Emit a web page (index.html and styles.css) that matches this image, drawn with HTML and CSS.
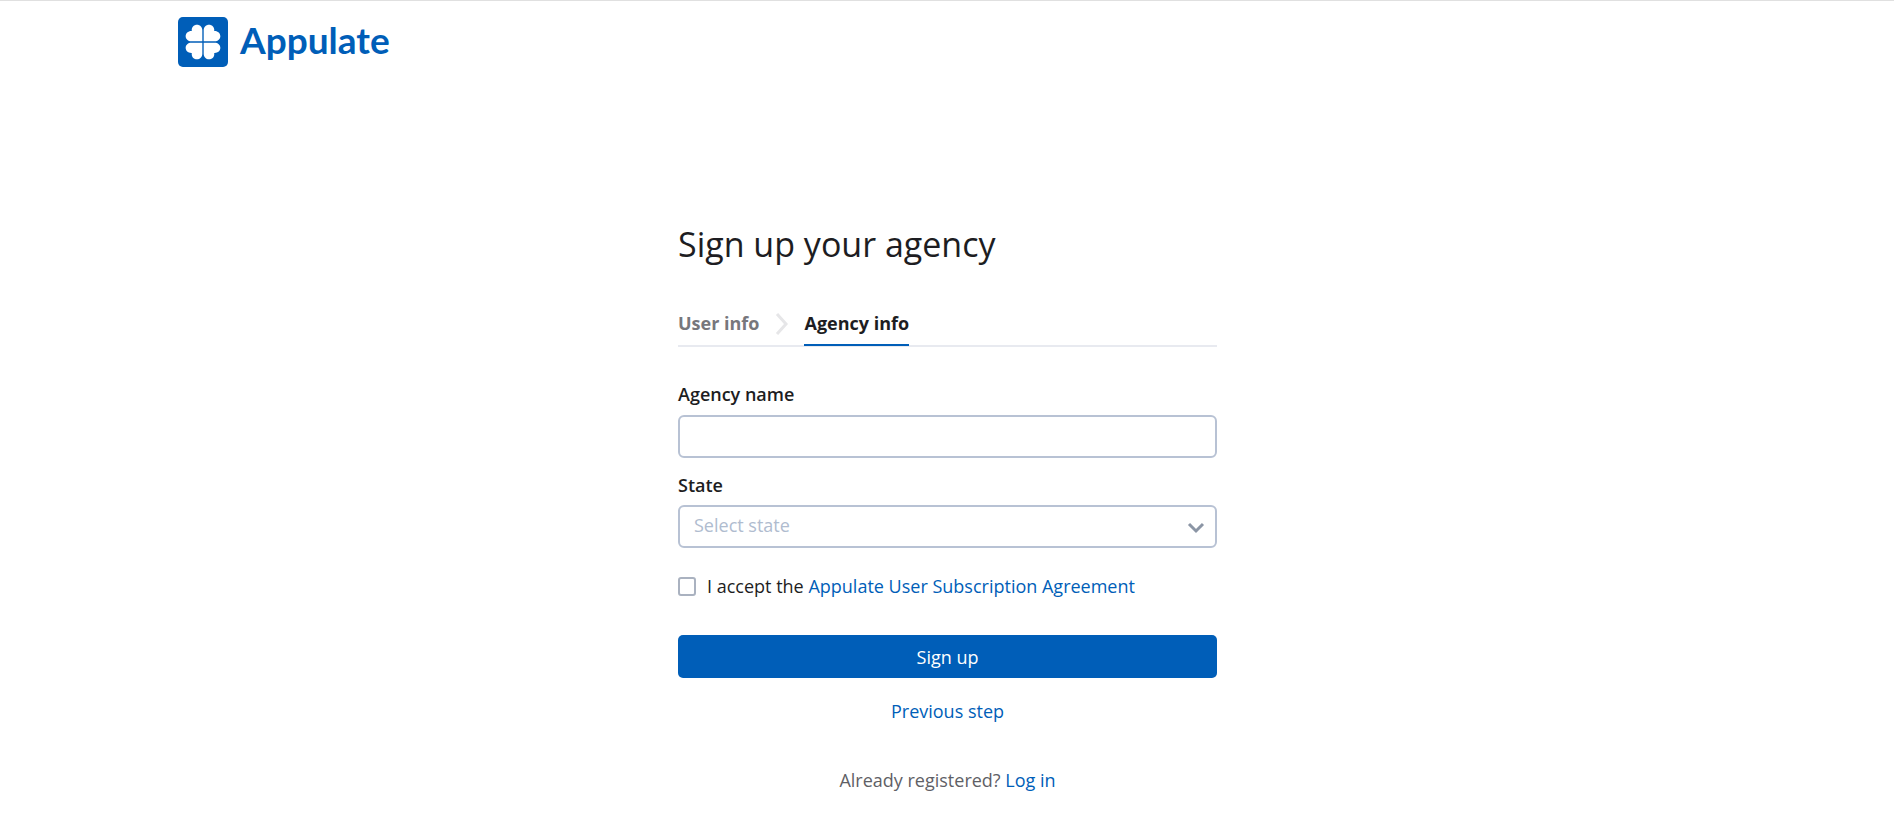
FILE: index.html
```html
<!DOCTYPE html>
<html lang="en">
<head>
    <meta charset="UTF-8">
    <title>Sign up your agency</title>
    <link rel="stylesheet" href="styles.css">
</head>
<body>
    <header class="top">
        <a class="logo" href="#">
            <svg class="logo-mark" width="50" height="50" viewBox="0 0 51 51">
                <rect width="51" height="51" rx="5" fill="#005eb8"/>
                <g fill="#fff">
                    <path id="leaf" d="M24.8 24.8V13.5c0-3.6-2.6-5.7-5.4-5.7-3 0-5.4 2.3-5.4 5.3 0 .5 0 .9.1 1.3-3.6-.3-6.3 2.200-6.300 5.300 0 3 2.500 5.100 5.800 5.100z"/>
                    <use href="#leaf" transform="matrix(-1 0 0 1 51 0)"/>
                    <use href="#leaf" transform="matrix(1 0 0 -1 0 51)"/>
                    <use href="#leaf" transform="matrix(-1 0 0 -1 51 51)"/>
                </g>
            </svg>
            <span class="logo-text">Appulate</span>
        </a>
    </header>

    <main class="signup">
        <h1>Sign up your agency</h1>

        <nav class="steps">
            <span class="step">User info</span>
            <svg class="step-arrow" width="13" height="22" viewBox="0 0 13 22">
                <path d="M2 1l9 10-9 10" fill="none" stroke="#e6e6e8" stroke-width="3"/>
            </svg>
            <span class="step step-active">Agency info</span>
        </nav>

        <form class="form">
            <label class="label" for="agencyName">Agency name</label>
            <input class="input" type="text" id="agencyName">

            <label class="label label-state">State</label>
            <div class="input select">
                <span class="placeholder">Select state</span>
                <svg class="select-arrow" width="18" height="12" viewBox="0 0 18 12">
                    <path d="M2 2l7 7 7-7" fill="none" stroke="#8b95a5" stroke-width="3"/>
                </svg>
            </div>

            <div class="accept">
                <span class="checkbox"></span>
                <span>I accept the <a href="#">Appulate User Subscription Agreement</a></span>
            </div>

            <button class="submit" type="button">Sign up</button>
            <a class="previous" href="#">Previous step</a>
        </form>

        <p class="login">Already registered? <a href="#">Log in</a></p>
    </main>
</body>
</html>
```

FILE: styles.css
```css
* {
    box-sizing: border-box;
}
body {
    margin: 0;
    background: #fff;
    color: #1d1d22;
    font-family: "Open Sans", "Noto Sans", sans-serif;
    font-size: 18px;
}
a {
    color: #005eb8;
    text-decoration: none;
}
.top {
    height: 90px;
    border-top: 1px solid #e0e0e0;
    padding: 16px 0 0 178px;
}
.logo {
    display: inline-flex;
    align-items: flex-start;
    gap: 12px;
}
.logo-text {
    font-family: Lato, sans-serif;
    font-size: 37px;
    font-weight: 700;
    line-height: 45px;
    color: #005eb8;
}
.signup {
    width: 539px;
    margin-left: 678px;
    padding-top: 130px;
}
h1 {
    margin: 0 0 43px;
    font-size: 34px;
    font-weight: 400;
    line-height: 48px;
}
.steps {
    display: flex;
    align-items: center;
    height: 36px;
    border-bottom: 2px solid #e8eaf0;
}
.step {
    font-size: 18px;
    font-weight: 700;
    color: #77777c;
    height: 36px;
    line-height: 26px;
}
.step-arrow {
    margin: 0 16px 8px 16px;
}
.step-active {
    color: #1d1d22;
    border-bottom: 2px solid #005eb8;
}
.form {
    display: flex;
    flex-direction: column;
}
.label {
    font-size: 18px;
    font-weight: 600;
    line-height: 26px;
    margin: 34px 0 8px;
}
.label-state {
    margin-top: 14px;
    margin-bottom: 7px;
}
.input {
    height: 43px;
    border: 2px solid #b8c2d4;
    border-radius: 6px;
    outline: none;
    background: #fff;
}
.select {
    display: flex;
    align-items: center;
    justify-content: space-between;
    padding: 0 10px 0 14px;
}
.placeholder {
    color: #b0bccf;
    margin-bottom: 3px;
}
.select-arrow {
    margin-top: 3px;
}
.accept {
    display: flex;
    align-items: center;
    gap: 11px;
    margin-top: 25px;
    line-height: 26px;
}
.checkbox {
    width: 18px;
    height: 19px;
    border: 2px solid #aab2c0;
    border-radius: 3px;
}
.submit {
    height: 43px;
    margin-top: 36px;
    border: none;
    border-radius: 5px;
    background: #005eb8;
    color: #fff;
    font-family: inherit;
    font-size: 18px;
}
.previous {
    margin-top: 20px;
    text-align: center;
    line-height: 26px;
}
.login {
    margin: 43px 0 0;
    text-align: center;
    line-height: 26px;
    color: #5f5f66;
}
```
